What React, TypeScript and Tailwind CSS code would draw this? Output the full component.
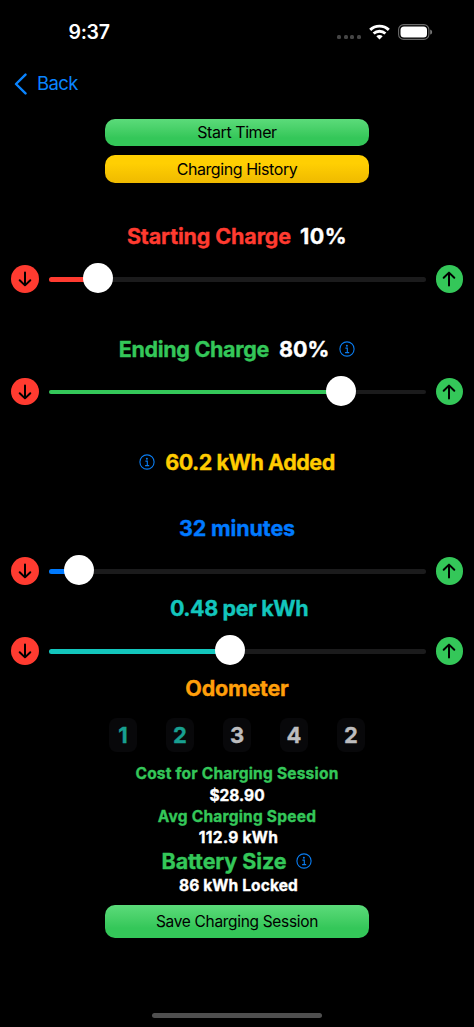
import React from 'react';
import clsx from 'clsx';

interface SliderRowProps {
  value: number; // position of the thumb along the track, in percent
  fill: string;
  className?: string;
}

const ArrowIcon: React.FC<{ up?: boolean }> = ({ up }) => (
  <svg
    viewBox="0 0 28 28"
    className={clsx('h-[28px] w-[28px] shrink-0', up && 'rotate-180')}
    fill="none"
    stroke="#000"
    strokeWidth="2"
    strokeLinecap="round"
    strokeLinejoin="round"
  >
    <path d="M14 7.5V20.2M8.7 15.2L14 20.4L19.3 15.2" />
  </svg>
);

const InfoIcon: React.FC = () => (
  <svg viewBox="0 0 16 16" className="h-4 w-4 shrink-0" fill="none" stroke="#0a7cf0" strokeWidth="1.1">
    <circle cx="8" cy="8" r="7.1" />
    <circle cx="7.9" cy="4.8" r="1" fill="#0a7cf0" stroke="none" />
    <path d="M6.4 7.1H8.3V11.5M6.1 11.6H10.2" />
  </svg>
);

const SliderRow: React.FC<SliderRowProps> = ({ value, fill, className }) => (
  <div className={clsx('flex h-[30px] items-center pr-[11px] pl-[11px]', className)}>
    <button className="flex h-[27.5px] w-[27.5px] items-center justify-center rounded-full bg-[#ff3b30]">
      <ArrowIcon />
    </button>
    <div className="relative mx-[10px] mt-[1px] h-[4.5px] flex-1 rounded-full bg-[#1b1b1c]">
      <div className={clsx('h-full rounded-full', fill)} style={{ width: `${value}%` }} />
      <div
        className="absolute -top-[14px] h-[30px] w-[30px] -translate-x-1/2 rounded-full bg-white"
        style={{ left: `${value}%` }}
      />
    </div>
    <button className="flex h-[27.5px] w-[27.5px] items-center justify-center rounded-full bg-[#34c759]">
      <ArrowIcon up />
    </button>
  </div>
);

const digits = [
  { value: '1', color: 'text-[#18a091]' },
  { value: '2', color: 'text-[#18a091]' },
  { value: '3', color: 'text-[#bdbdbf]' },
  { value: '4', color: 'text-[#bdbdbf]' },
  { value: '2', color: 'text-[#bdbdbf]' },
];

// a hairline stroke brings the bold cut closer to the system heading weight
const heavy = 'font-bold [-webkit-text-stroke:0.35px_currentColor]';
const heading = clsx(heavy, 'flex h-8 items-center justify-center whitespace-pre text-[21.5px]');
const detail = clsx(heavy, 'flex items-center justify-center whitespace-pre text-[15.5px]');

const App: React.FC = () => {
  return (
    <div className="flex h-[1027px] w-[474px] flex-col overflow-hidden bg-black font-['Inter',sans-serif] text-white">
      <header className="flex h-16 shrink-0 items-center justify-between pr-[41px] pl-[68.5px]">
        <span className="mt-px text-[19.5px] font-semibold tracking-[-0.3px]">9:37</span>
        <div className="flex items-center">
          <div className="mt-[10px] mr-[8px] flex gap-[2.7px]">
            {[0, 1, 2, 3].map((dot) => (
              <span key={dot} className="h-1 w-1 rounded-[1.5px] bg-[#454545]" />
            ))}
          </div>
          <svg viewBox="0 0 21 16" className="mr-[8px] h-4 w-[21px]" fill="none" stroke="#fff" strokeWidth="2.9">
            <path d="M1.2 5.9C6.3 .9 14.7 .9 19.8 5.9" />
            <path d="M4.6 9.5C8 6.4 13 6.4 16.4 9.5" />
            <path d="M7.3 12.2C9.2 10.5 11.8 10.5 13.7 12.2L10.5 15.5Z" fill="#fff" stroke="none" />
          </svg>
          <svg viewBox="0 0 35 16" className="h-4 w-[35px]">
            <rect x=".6" y=".6" width="30.3" height="14.8" rx="5" fill="none" stroke="#6b6b6b" strokeWidth="1.1" />
            <rect x="2.5" y="2.4" width="26.5" height="11.2" rx="3.5" fill="#fff" />
            <path d="M32.2 5.4C34.8 6.3 34.8 9.7 32.2 10.6Z" fill="#777" />
          </svg>
        </div>
      </header>

      <nav className="flex h-10 shrink-0 items-center pl-[14px] text-[#0a84ff]">
        <svg
          viewBox="0 0 14 22"
          className="mr-[9px] h-[22px] w-[14px]"
          fill="none"
          stroke="currentColor"
          strokeWidth="2.4"
          strokeLinecap="round"
          strokeLinejoin="round"
        >
          <path d="M11.5 1.6L2 11L11.5 20.4" />
        </svg>
        <span className="text-[18.5px] tracking-[-0.6px]">Back</span>
      </nav>

      <main className="flex flex-col pt-[14.5px]">
        <div className="flex flex-col items-center gap-[9px] text-[16px] tracking-[-0.43px] text-black">
          <button className="h-[27.5px] w-[264px] rounded-[10px] bg-linear-to-b from-[#5bdb7a] to-[#34c759] to-70%">
            Start Timer
          </button>
          <button className="h-[27.5px] w-[264px] rounded-[10px] bg-linear-to-b from-[#ffcf02] from-30% to-[#efba00]">
            Charging History
          </button>
        </div>

        <h2 className={clsx(heading, 'mt-[38px] gap-[9px]')}>
          <span className="tracking-[-0.12px] text-[#ff3b30]">Starting Charge</span>
          <span className="tracking-[0.5px]">10%</span>
        </h2>
        <SliderRow value={13} fill="bg-[#ff3b30]" className="mt-[11.5px]" />

        <h2 className={clsx(heading, 'mt-[39px] gap-[10px]')}>
          <span className="tracking-[-0.3px] text-[#34c759]">Ending Charge</span>
          <span>80%</span>
          <InfoIcon />
        </h2>
        <SliderRow value={77.7} fill="bg-[#34c759]" className="mt-[11.5px]" />

        <h2 className={clsx(heading, 'mt-[39.5px] gap-[10px]')}>
          <InfoIcon />
          <span className="tracking-[-0.45px] text-[#ffcc00]">60.2 kWh Added</span>
        </h2>

        <h2 className={clsx(heading, 'mt-[34px] text-[#007aff]')}>
          <span className="tracking-[-0.12px]">32 minutes</span>
        </h2>
        <SliderRow value={8} fill="bg-[#007aff]" className="mt-[12px]" />

        <h2 className={clsx(heading, 'mt-[6px] pl-1 text-[#13c6bd]')}>
          <span className="tracking-[-0.4px]">0.48 per kWh</span>
        </h2>
        <SliderRow value={48.1} fill="bg-[#13c6bd]" className="mt-[12px]" />

        <h2 className={clsx(heading, 'mt-[6px] text-[#ff9f0a]')}>
          <span className="tracking-[-0.2px]">Odometer</span>
        </h2>
        <div className="mt-[14px] flex justify-center gap-[29px]">
          {digits.map((digit, i) => (
            <span
              key={i}
              className={clsx(
                heavy,
                'flex h-[34px] w-[28px] items-center justify-center rounded-[8px] bg-[#08080a] pt-px text-[22px]',
                digit.color,
              )}
            >
              {digit.value}
            </span>
          ))}
        </div>

        <div className="mt-[11px] flex flex-col">
          <p className={clsx(detail, 'h-[21.5px] text-[#34c759]')}>
            <span className="tracking-[0.22px]">Cost for Charging Session</span>
          </p>
          <p className={clsx(detail, 'h-[21.5px]')}>
            <span>$28.90</span>
          </p>
          <p className={clsx(detail, 'h-[21px] text-[#34c759]')}>
            <span className="tracking-[0.22px]">Avg Charging Speed</span>
          </p>
          <p className={clsx(detail, 'h-[22px] pl-[3px]')}>
            <span className="tracking-[0.3px]">112.9 kWh</span>
          </p>
          <h2 className={clsx(heavy, 'flex h-6 items-center justify-center gap-[10px] text-[21.5px]')}>
            <span className="tracking-[-0.1px] text-[#34c759]">Battery Size</span>
            <InfoIcon />
          </h2>
          <p className={clsx(detail, 'mt-[2px] h-[21px] pl-[3px]')}>
            <span className="tracking-[0.12px]">86 kWh Locked</span>
          </p>
        </div>

        <button className="mt-[9px] h-[32.5px] w-[264px] self-center rounded-[10px] bg-linear-to-b from-[#5bdb7a] to-[#34c759] to-70% text-[15.5px] tracking-[-0.32px] text-black">
          Save Charging Session
        </button>
      </main>

      <div className="mt-auto mb-[9px] h-[5.5px] w-[170px] shrink-0 self-center rounded-full bg-[#4f4f4f]" />
    </div>
  );
};

export default App;
